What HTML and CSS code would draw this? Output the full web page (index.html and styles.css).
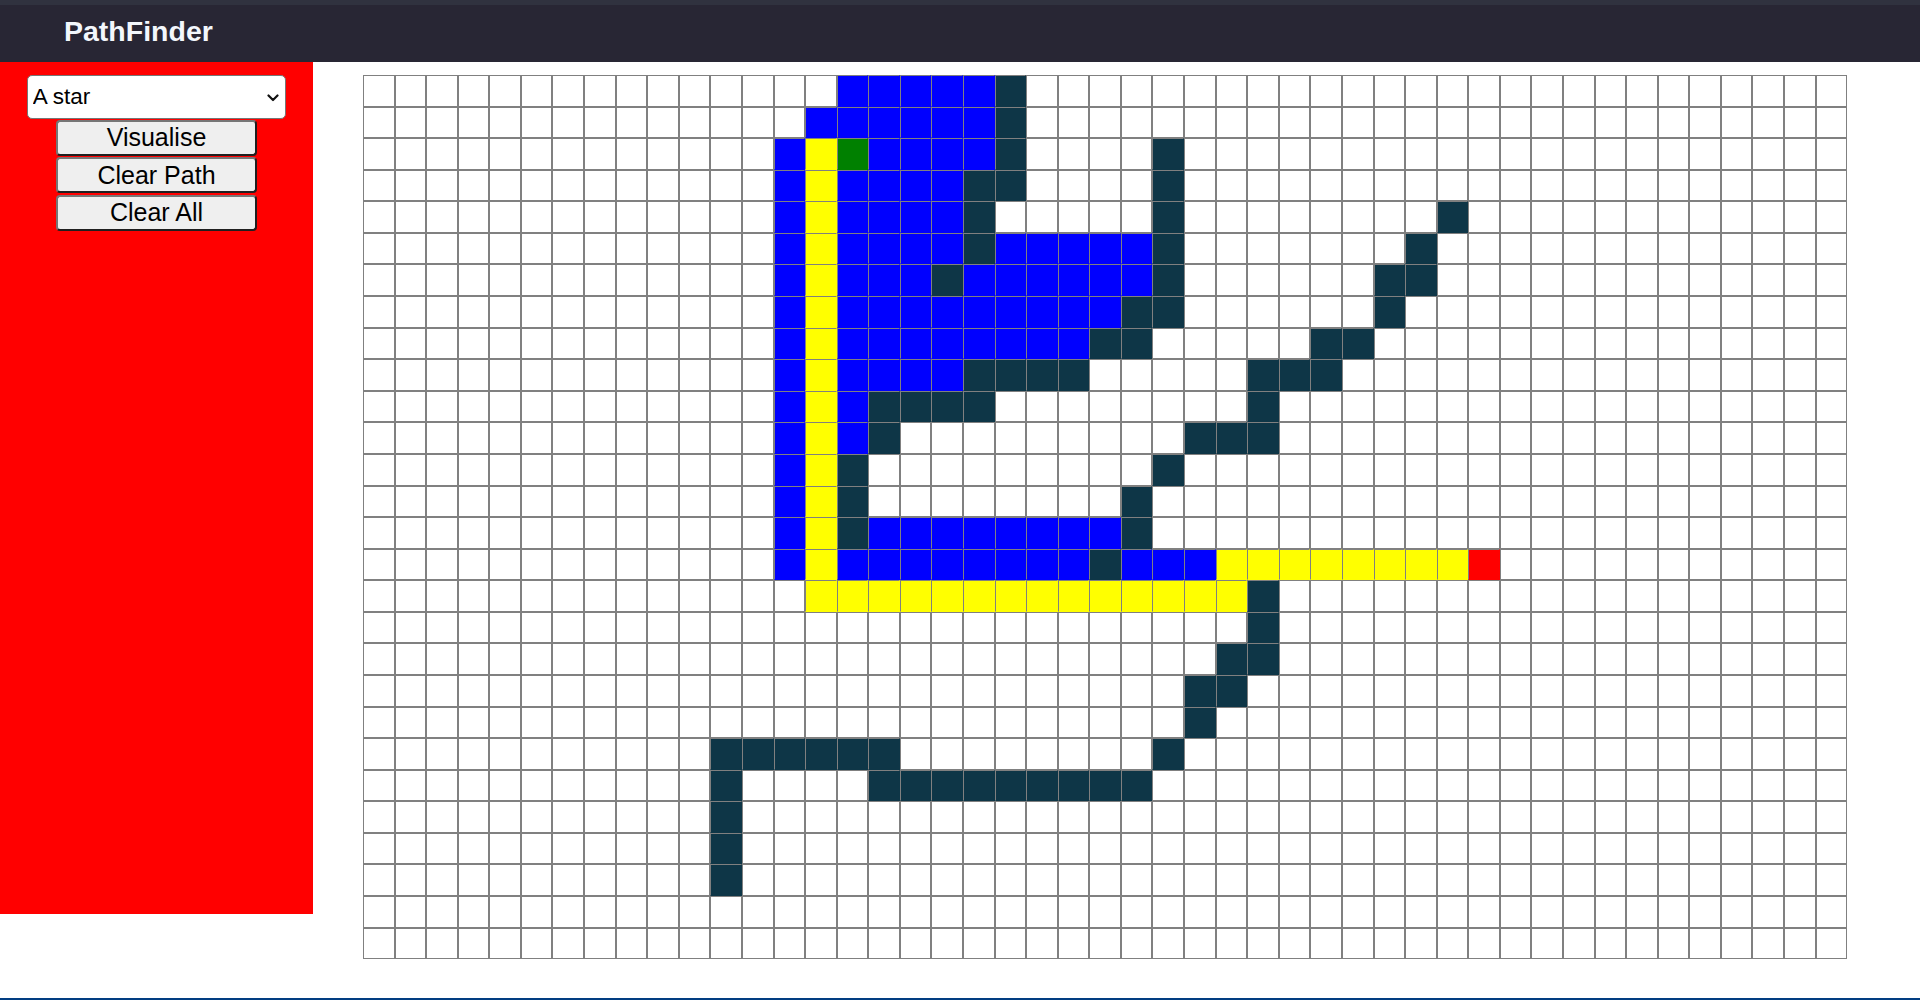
FILE: index.html
```html
<!DOCTYPE html>
<html lang="en">
<head>
<meta charset="utf-8">
<title>PathFinder</title>
<link rel="stylesheet" href="styles.css">
</head>
<body>
<header class="topbar">
  <h1 class="brand">PathFinder</h1>
</header>
<div class="workspace">
  <aside class="sidebar">
    <div class="picker">
      <select class="algo">
        <option>A star</option>
        <option>Dijkstra</option>
        <option>BFS</option>
        <option>DFS</option>
      </select>
      <svg class="chev" width="12" height="8" viewBox="0 0 12 8" aria-hidden="true">
        <path d="M1.5 1.5 L6 6 L10.5 1.5" fill="none" stroke="#111" stroke-width="2.2" stroke-linecap="round" stroke-linejoin="round"/>
      </svg>
    </div>
    <button class="btn first">Visualise</button>
    <button class="btn">Clear Path</button>
    <button class="btn">Clear All</button>
  </aside>
  <main class="stage">
    <div class="board" id="board"></div>
  </main>
</div>
<div class="statusline"></div>
<script src="script.js"></script>
</body>
</html>
```
FILE: styles.css
```css
html, body {
  margin: 0;
  padding: 0;
}
body {
  font-family: "Liberation Sans", Arial, sans-serif;
  display: flex;
  flex-direction: column;
  height: 100vh;
  background: #ffffff;
  overflow: hidden;
}
.topbar {
  flex: none;
  height: 57px;
  border-top: 5px solid #30323f;
  background: #282634;
  padding-left: 64px;
}
.brand {
  margin: 0;
  padding-top: 9.8px;
  font-size: 28.5px;
  line-height: 32px;
  font-weight: bold;
  color: #f3f7fc;
}
.workspace {
  flex: 1;
  display: flex;
  align-items: flex-start;
  min-height: 0;
}
.sidebar {
  flex: none;
  width: 313px;
  height: 852px;
  box-sizing: border-box;
  padding-top: 12.7px;
  background: #ff0000;
  display: flex;
  flex-direction: column;
  align-items: center;
}
.picker {
  position: relative;
  width: 258.4px;
  height: 44px;
}
.algo {
  display: block;
  width: 100%;
  height: 44px;
  box-sizing: border-box;
  -webkit-appearance: none;
  appearance: none;
  font-family: "Liberation Sans", Arial, sans-serif;
  font-size: 22.5px;
  color: #000;
  background: #ffffff;
  border: 1px solid #767676;
  border-radius: 5px;
  padding: 0 0 0 4.5px;
}
.chev {
  position: absolute;
  left: 240px;
  top: 19px;
  pointer-events: none;
}
.btn {
  width: 200.6px;
  height: 36px;
  box-sizing: border-box;
  margin-top: 1.6px;
  padding: 0;
  font-family: "Liberation Sans", Arial, sans-serif;
  font-size: 25px;
  color: #000;
  background: #efefef;
  border: 2px solid;
  border-color: #767676 #1f1f1f #1f1f1f #767676;
  border-radius: 4px;
}
.btn.first {
  margin-top: 1px;
}
.stage {
  flex: 1;
  padding: 13px 0 0 50px;
}
.board {
  display: grid;
  grid-template-columns: repeat(47, 31.58px);
  grid-template-rows: repeat(28, 31.58px);
}
.cell {
  box-sizing: border-box;
  border: 1px solid #808080;
  background: #ffffff;
}
.cell.b {
  background: #0000ff;
  border-color: #808080 #0000ff #0000ff #808080;
}
.cell.y {
  background: #ffff00;
  border-color: #808080 #ffff00 #ffff00 #808080;
}
.cell.g {
  background: #008000;
  border-color: #808080 #008000 #008000 #808080;
}
.cell.r {
  background: #ff0000;
  border-color: #808080 #ff0000 #ff0000 #808080;
}
.cell.w {
  background: #0e3647;
  border-color: #808080 #0e3647 #0e3647 #808080;
}
.statusline {
  flex: none;
  height: 2px;
  background: #023d82;
}
```
FILE: script.js
```js
(function () {
  var ROWS = 28, COLS = 47;
  var spans = [
    [0,15,19,'b'],[0,20,20,'w'],
    [1,14,19,'b'],[1,20,20,'w'],
    [2,13,13,'b'],[2,14,14,'y'],[2,15,15,'g'],[2,16,19,'b'],[2,20,20,'w'],[2,25,25,'w'],
    [3,13,13,'b'],[3,14,14,'y'],[3,15,18,'b'],[3,19,20,'w'],[3,25,25,'w'],
    [4,13,13,'b'],[4,14,14,'y'],[4,15,18,'b'],[4,19,19,'w'],[4,25,25,'w'],[4,34,34,'w'],
    [5,13,13,'b'],[5,14,14,'y'],[5,15,18,'b'],[5,19,19,'w'],[5,20,24,'b'],[5,25,25,'w'],[5,33,33,'w'],
    [6,13,13,'b'],[6,14,14,'y'],[6,15,17,'b'],[6,18,18,'w'],[6,19,24,'b'],[6,25,25,'w'],[6,32,33,'w'],
    [7,13,13,'b'],[7,14,14,'y'],[7,15,23,'b'],[7,24,25,'w'],[7,32,32,'w'],
    [8,13,13,'b'],[8,14,14,'y'],[8,15,22,'b'],[8,23,24,'w'],[8,30,31,'w'],
    [9,13,13,'b'],[9,14,14,'y'],[9,15,18,'b'],[9,19,22,'w'],[9,28,30,'w'],
    [10,13,13,'b'],[10,14,14,'y'],[10,15,15,'b'],[10,16,19,'w'],[10,28,28,'w'],
    [11,13,13,'b'],[11,14,14,'y'],[11,15,15,'b'],[11,16,16,'w'],[11,26,28,'w'],
    [12,13,13,'b'],[12,14,14,'y'],[12,15,15,'w'],[12,25,25,'w'],
    [13,13,13,'b'],[13,14,14,'y'],[13,15,15,'w'],[13,24,24,'w'],
    [14,13,13,'b'],[14,14,14,'y'],[14,15,15,'w'],[14,16,23,'b'],[14,24,24,'w'],
    [15,13,13,'b'],[15,14,14,'y'],[15,15,22,'b'],[15,23,23,'w'],[15,24,26,'b'],[15,27,34,'y'],[15,35,35,'r'],
    [16,14,27,'y'],[16,28,28,'w'],
    [17,28,28,'w'],
    [18,27,28,'w'],
    [19,26,27,'w'],
    [20,26,26,'w'],
    [21,11,16,'w'],[21,25,25,'w'],
    [22,11,11,'w'],[22,16,24,'w'],
    [23,11,11,'w'],[24,11,11,'w'],[25,11,11,'w']
  ];
  var grid = [];
  for (var r = 0; r < ROWS; r++) {
    grid.push(new Array(COLS).fill(''));
  }
  spans.forEach(function (s) {
    for (var c = s[1]; c <= s[2]; c++) grid[s[0]][c] = s[3];
  });
  var board = document.getElementById('board');
  var frag = document.createDocumentFragment();
  for (var i = 0; i < ROWS; i++) {
    for (var j = 0; j < COLS; j++) {
      var d = document.createElement('div');
      d.className = grid[i][j] ? 'cell ' + grid[i][j] : 'cell';
      frag.appendChild(d);
    }
  }
  board.appendChild(frag);
})();
```
